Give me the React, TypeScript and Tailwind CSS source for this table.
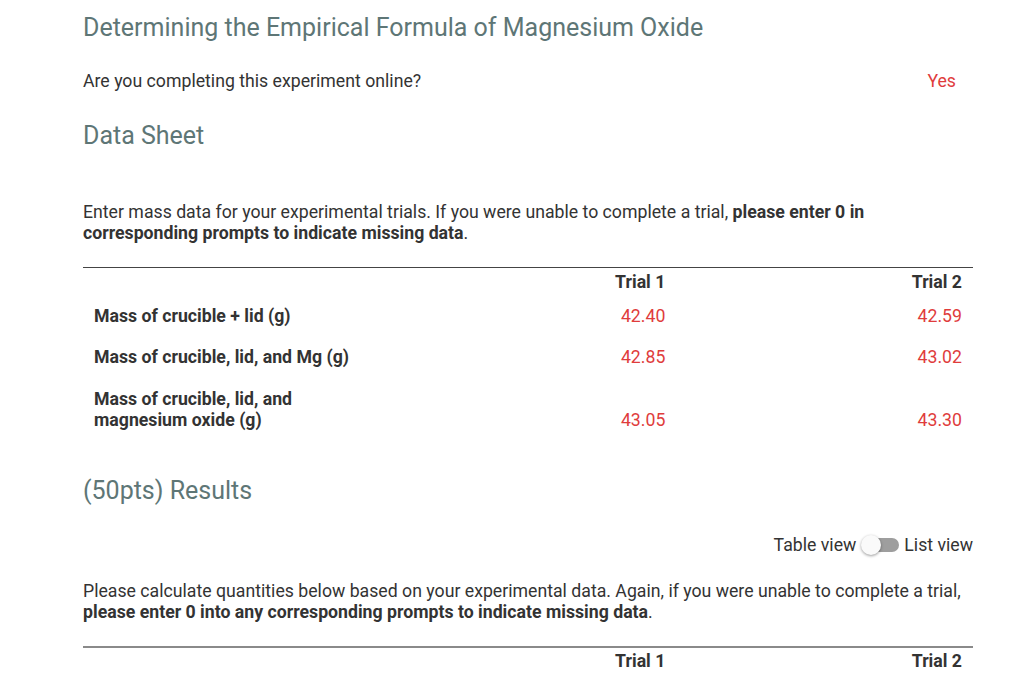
import React, { useState } from 'react';

const rows = [
    { label: 'Mass of crucible + lid (g)', t1: '42.40', t2: '42.59' },
    { label: 'Mass of crucible, lid, and Mg (g)', t1: '42.85', t2: '43.02' },
    { label: 'Mass of crucible, lid, and magnesium oxide (g)', t1: '43.05', t2: '43.30' },
];

const App = () => {
    const [listView, setListView] = useState(false);

    return (
        <div className="min-h-screen bg-white text-[#333] font-['Roboto',sans-serif]">
            <div className="ml-[83px] w-[890px] pt-[12px]">
                <h1 className="text-[25px] leading-[32px] text-[#5e7676]">
                    Determining the Empirical Formula of Magnesium Oxide
                </h1>

                <div className="flex justify-between items-center mt-[25px] text-[17.7px] leading-[24px]">
                    <span>Are you completing this experiment online?</span>
                    <span className="text-[#e03c3c] mr-[17px]">Yes</span>
                </div>

                <h2 className="text-[25px] leading-[32px] text-[#5e7676] mt-[27px]">Data Sheet</h2>

                <p className="mt-[50px] text-[17.7px] leading-[21px]">
                    Enter mass data for your experimental trials. If you were unable to complete a trial,{' '}
                    <b className="font-bold">please enter 0 in corresponding prompts to indicate missing data</b>.
                </p>

                <div className="mt-[23px] border-t border-[#444]">
                    <div className="grid grid-cols-3 text-[17.7px] leading-[21px] font-bold pt-[4px]">
                        <div />
                        <div className="text-right pr-[11px]">Trial 1</div>
                        <div className="text-right pr-[11px]">Trial 2</div>
                    </div>
                    {rows.map((r, i) => (
                        <div
                            key={r.label}
                            className={`grid grid-cols-3 items-end text-[17.7px] leading-[21px] ${i === 0 ? 'mt-[13px]' : i === 1 ? 'mt-[20px]' : 'mt-[21px]'}`}
                        >
                            <div className="pl-[11px] pr-[30px] font-bold">{r.label}</div>
                            <div className="text-right pr-[11px] text-[#e03c3c]">{r.t1}</div>
                            <div className="text-right pr-[11px] text-[#e03c3c]">{r.t2}</div>
                        </div>
                    ))}
                </div>

                <h2 className="text-[25px] leading-[32px] text-[#5e7676] mt-[44px]">(50pts) Results</h2>

                <div className="flex justify-end items-center mt-[26px] text-[17.7px] leading-[24px]">
                    <span>Table view</span>
                    <button
                        onClick={() => setListView(!listView)}
                        className="relative w-[38px] h-[24px] mx-[5px] flex items-center"
                    >
                        <span className="absolute left-[6px] right-0 h-[14px] rounded-full bg-[#9e9e9e]" />
                        <span
                            className={`absolute top-[2px] w-[20px] h-[20px] rounded-full bg-[#fafafa] shadow-[0_1px_3px_rgba(0,0,0,0.4)] ${listView ? 'left-[18px]' : 'left-0'}`}
                        />
                    </button>
                    <span>List view</span>
                </div>

                <p className="mt-[24px] text-[17.7px] leading-[21px]">
                    Please calculate quantities below based on your experimental data. Again, if you were unable to complete a trial,{' '}
                    <b className="font-bold">please enter 0 into any corresponding prompts to indicate missing data</b>.
                </p>

                <div className="mt-[23px] border-t-2 border-[#8a8a8a]">
                    <div className="grid grid-cols-3 text-[17.7px] leading-[21px] font-bold pt-[3px]">
                        <div />
                        <div className="text-right pr-[11px]">Trial 1</div>
                        <div className="text-right pr-[11px]">Trial 2</div>
                    </div>
                </div>
            </div>
        </div>
    );
};

export default App;
